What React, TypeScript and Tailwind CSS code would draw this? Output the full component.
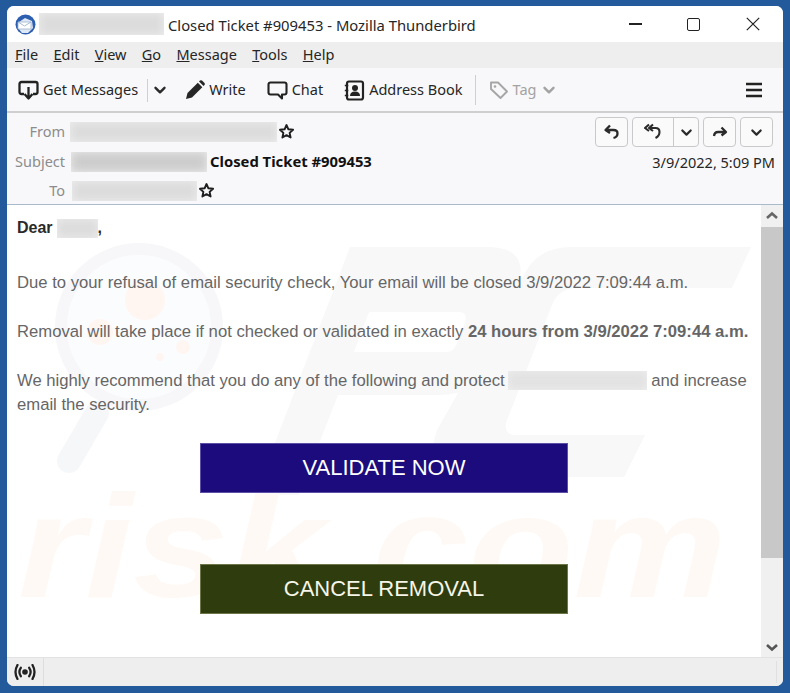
import React from "react";

const ui = { fontFamily: '"Noto Sans", "Open Sans", sans-serif' };

function Blur({ w, h, tone = "bg-[#dcdcdc]", className = "" }: { w: string; h: string; tone?: string; className?: string }) {
  return (
    <span className={`inline-block overflow-hidden bg-[#efefef] ${w} ${h} ${className}`}>
      <span className={`block w-full h-full blur-[4px] ${tone}`} />
    </span>
  );
}

function Chevron({ size = 14, color = "#2b2b2b", sw = 2.4 }: { size?: number; color?: string; sw?: number }) {
  return (
    <svg width={size} height={size} viewBox="0 0 14 14" fill="none">
      <path d="M2.5 4.8 7 9.3l4.500-4.500" stroke={color} strokeWidth={sw} strokeLinecap="round" strokeLinejoin="round" />
    </svg>
  );
}

function Star() {
  return (
    <svg width="17" height="17" viewBox="0 0 17 17" fill="none">
      <path d="M8.5 2 10.4 6.300l4.700.5-3.500 3.100 1 4.600-4.100-2.400-4.100 2.400 1-4.600-3.500-3.100 4.700-.5z" stroke="#1f1f1f" strokeWidth="1.900" strokeLinejoin="round" />
    </svg>
  );
}

function HeaderButton({ children, className = "" }: { children: React.ReactNode; className?: string }) {
  return (
    <div className={`h-[30px] flex items-center justify-center border border-[#c9c9c9] rounded-[4px] bg-[#fafafa] ${className}`}>
      {children}
    </div>
  );
}

function ToolItem({ icon, label, className = "" }: { icon: React.ReactNode; label: string; className?: string }) {
  return (
    <div className={`flex items-center gap-[4px] ${className}`}>
      {icon}
      <span>{label}</span>
    </div>
  );
}

function Watermark() {
  return (
    <div className="absolute inset-0 overflow-hidden pointer-events-none select-none">
      <svg className="absolute left-0 top-0" width="754" height="320" viewBox="0 0 754 320" fill="none">
        <circle cx="132" cy="122" r="78" stroke="#f7f7f9" strokeWidth="12" fill="#fbfcfe" />
        <circle cx="138" cy="95" r="20" fill="#fff6f2" />
        <circle cx="93" cy="127" r="13" fill="#fff6f2" />
        <circle cx="176" cy="142" r="7" fill="#fff6f2" />
        <circle cx="153" cy="152" r="4" fill="#fff6f2" />
        <path d="M90 208 62 256" stroke="#f6f7f9" strokeWidth="24" strokeLinecap="round" />
        <path
          fillRule="evenodd"
          fill="#f8f8f9"
          d="M343 42H480Q525 42 510 85L490 150Q477 190 430 190H331L292 290H248Z M362 107 347 147H440Q448 147 451 135L458 118Q461 107 452 107Z"
        />
        <path fill="#f8f8f9" d="M565 42H744L725 83H570Q552 83 545 100L500 215Q495 230 510 230H638L617 272H460Q415 272 430 225L515 75Q527 42 565 42Z" />
      </svg>
      <div
        className="absolute left-[11px] top-[269px] text-[#fff9f5] font-bold italic text-[146px] leading-none whitespace-nowrap origin-left scale-x-[1.18]"
        style={{ fontFamily: '"Liberation Sans", sans-serif' }}
      >
        risk.com
      </div>
    </div>
  );
}

export default function App() {
  return (
    <div className="w-[790px] h-[693px] bg-[#225a9b] pt-[6px] px-[7px] pb-[7px] overflow-hidden">
      <div className="h-full flex flex-col rounded-[7px] overflow-hidden bg-white text-[#1c1c1c]" style={ui}>
        {/* Title bar */}
        <div className="h-[36px] flex items-center bg-white shrink-0">
          <svg className="ml-[8px]" width="21" height="21" viewBox="0 0 21 21">
            <circle cx="10.5" cy="10.5" r="10" fill="#2d5fb0" />
            <path d="M4 8 10 4l7 3 1 7-5 5H7L3 14z" fill="#dfe8f5" />
            <path d="M3 8h13v7H3z" fill="#ffffff" stroke="#9fb3d1" strokeWidth="0.8" />
            <path d="M3 8l6.500 4L16 8" stroke="#9fb3d1" strokeWidth="0.9" fill="none" />
          </svg>
          <Blur w="w-[125px]" h="h-[22px]" className="ml-[3px]" tone="bg-[#dcdcdc]" />
          <span className="ml-[4px] pt-[2px] text-[14.8px] text-[#262626] whitespace-nowrap">Closed Ticket #909453 - Mozilla Thunderbird</span>
          <div className="ml-auto flex items-center h-full">
            <div className="w-[60px] flex justify-center pl-[2px]">
              <div className="w-[13px] h-[1.5px] bg-[#222]" />
            </div>
            <div className="w-[60px] flex justify-center pr-[2px]">
              <div className="w-[13px] h-[13px] rounded-[2px] border-[1.5px] border-[#222]" />
            </div>
            <div className="w-[59px] flex justify-center pr-[1px]">
              <svg width="14" height="14" viewBox="0 0 14 14" fill="none">
                <path d="M.8.8l12.400 12.400M13.200.8.8 13.200" stroke="#222" strokeWidth="1.200" />
              </svg>
            </div>
          </div>
        </div>

        {/* Menu */}
        <div className="h-[26px] shrink-0 bg-[#eeeeee] flex items-center pl-[8px] gap-[15.3px] text-[14.5px] text-[#262626]">
          <span><u>F</u>ile</span>
          <span><u>E</u>dit</span>
          <span><u>V</u>iew</span>
          <span><u>G</u>o</span>
          <span><u>M</u>essage</span>
          <span><u>T</u>ools</span>
          <span><u>H</u>elp</span>
        </div>

        {/* Toolbar */}
        <div className="h-[45px] shrink-0 bg-[#f8f8fa] border-b-[2px] border-[#cfcfcf] flex items-center pt-[1px] text-[14.5px] text-[#262626]">
          <ToolItem
            className="ml-[11px]"
            label="Get Messages"
            icon={
              <svg width="21" height="21" viewBox="0 0 21 21" fill="none">
                <path d="M6 14H3.500Q1.500 14 1.500 12V4Q1.500 2 3.500 2h14q2 0 2 2v8q0 2-2 2H15" stroke="#222" strokeWidth="2.300" />
                <path d="M10.500 7v11M6.500 14l4 4.500 4-4.500" stroke="#222" strokeWidth="2.300" strokeLinejoin="round" />
              </svg>
            }
          />
          <div className="ml-[9px] w-[1px] h-[23px] bg-[#cfcfcf]" />
          <div className="ml-[5px]"><Chevron size={14} /></div>
          <ToolItem
            className="ml-[18px]"
            label="Write"
            icon={
              <svg width="20" height="20" viewBox="0 0 20 20" fill="#262626">
                <path d="M1 19l1.500-6L12.800 2.700l4.500 4.500L7 17.500z" />
                <path d="M14 1.500l1-1q1-.7 2 0l2.500 2.500q.7 1 0 2l-1 1z" />
              </svg>
            }
          />
          <ToolItem
            className="ml-[21px]"
            label="Chat"
            icon={
              <svg width="21" height="21" viewBox="0 0 21 21" fill="none">
                <path d="M3.500 2.500h14q2 0 2 2v8q0 2-2 2h-2.500v4l-4-4h-7.500q-2 0-2-2v-8q0-2 2-2z" stroke="#222" strokeWidth="2.100" strokeLinejoin="round" />
              </svg>
            }
          />
          <ToolItem
            className="ml-[21px]"
            label="Address Book"
            icon={
              <svg width="21" height="21" viewBox="0 0 21 21" fill="none">
                <rect x="3" y="1.500" width="16" height="18" rx="2" stroke="#222" strokeWidth="2.200" />
                <circle cx="11" cy="8" r="3" fill="#222" />
                <path d="M6 16q0-4.500 5-4.500t5 4.500z" fill="#222" />
                <path d="M.8 5.500h3.500M.8 10.500h3.500M.8 15.500h3.500" stroke="#222" strokeWidth="1.700" />
              </svg>
            }
          />
          <div className="ml-[13px] w-[1px] h-[30px] bg-[#cfcfcf]" />
          <div className="ml-[13px] flex items-center gap-[3px] text-[#a3a3a3]">
            <svg width="20" height="20" viewBox="0 0 20 20" fill="none">
              <path d="M2 2.500h7l9 9-6.500 6.500-9.500-9z" stroke="#a6a6a6" strokeWidth="1.900" strokeLinejoin="round" />
              <circle cx="6" cy="6.500" r="1.300" fill="#a6a6a6" />
            </svg>
            <span>Tag</span>
            <div className="ml-[3px]"><Chevron size={14} color="#a3a3a3" /></div>
          </div>
          <svg className="ml-auto mr-[21px]" width="16" height="16" viewBox="0 0 16 16" fill="none">
            <path d="M0 2h16M0 8h16M0 14h16" stroke="#222" strokeWidth="2.400" />
          </svg>
        </div>

        {/* Message header */}
        <div className="h-[92px] shrink-0 bg-[#f8f8fa] border-b-[1.5px] border-[#a9bacb] flex justify-between text-[14.5px]">
          <div className="flex flex-col w-[420px]">
            <div className="flex items-center h-[31px] pt-[6px]">
              <span className="w-[58px] text-right text-[#8c8c8c]">From</span>
              <Blur w="w-[207px]" h="h-[20px]" className="ml-[5px]" />
              <div className="ml-[1px]"><Star /></div>
            </div>
            <div className="flex items-center h-[32px] pt-[3px]">
              <span className="w-[58px] text-right text-[#8c8c8c]">Subject</span>
              <Blur w="w-[136px]" h="h-[20px]" className="ml-[6px]" tone="bg-[#cdcdcd]" />
              <span className="ml-[3px] font-bold text-[14.8px] text-[#111]">Closed Ticket #909453</span>
            </div>
            <div className="flex items-center h-[27px] pt-[2px]">
              <span className="w-[58px] text-right text-[#8c8c8c]">To</span>
              <Blur w="w-[125px]" h="h-[20px]" className="ml-[7px]" />
              <div className="ml-[1px]"><Star /></div>
            </div>
          </div>
          <div className="flex flex-col items-end pr-[8px] pt-[4px]">
            <div className="flex gap-[4px] mr-[2px]">
              <HeaderButton className="w-[33px]">
                <svg width="18" height="18" viewBox="0 0 18 18" fill="none">
                  <path d="M7 2.500 2.500 7 7 10M3 7h7.500q4 0 4 3.500t-4 4.500" stroke="#2b2b2b" strokeWidth="2.300" strokeLinejoin="round" />
                </svg>
              </HeaderButton>
              <div className="w-[67px] h-[30px] flex border border-[#c9c9c9] rounded-[4px] bg-[#fafafa]">
                <div className="w-[41px] flex items-center justify-center border-r border-[#c9c9c9]">
                  <svg width="20" height="18" viewBox="0 0 20 18" fill="none">
                    <path d="M6 1.500 2 5l4 3M10 1.500 6 5l4 3M6.500 5h6q4 0 4 4t-4 6" stroke="#2b2b2b" strokeWidth="2.100" strokeLinejoin="round" />
                  </svg>
                </div>
                <div className="flex-1 flex items-center justify-center"><Chevron size={13} /></div>
              </div>
              <HeaderButton className="w-[33px]">
                <svg width="18" height="18" viewBox="0 0 18 18" fill="none">
                  <path d="M10.500 4.500 15 9l-4.500 3.500M14.500 9H7q-3.500 0-4 4" stroke="#2b2b2b" strokeWidth="2.300" strokeLinejoin="round" />
                </svg>
              </HeaderButton>
              <HeaderButton className="w-[33px]"><Chevron size={13} /></HeaderButton>
            </div>
            <div className="mt-[5px] text-[14.5px] text-[#262626] whitespace-nowrap">3/9/2022, 5:09 PM</div>
          </div>
        </div>

        {/* Body */}
        <div className="flex-1 min-h-0 flex bg-white">
          <div className="relative flex-1 min-w-0 pl-[10px] pt-[11px] text-[16.67px] leading-[24px] text-[#666666]" style={{ fontFamily: '"Liberation Sans", Arial, sans-serif' }}>
            <Watermark />
            <div className="relative">
              <div className="flex items-center text-[#2a2a2a] text-[16px] mb-[31px]">
                <b>Dear</b>
                <Blur w="w-[41px]" h="h-[19px]" className="ml-[4px]" />
                <b>,</b>
              </div>
              <p className="mb-[25px] whitespace-nowrap">Due to your refusal of email security check, Your email will be closed 3/9/2022 7:09:44 a.m.</p>
              <p className="mb-[25px] whitespace-nowrap">Removal will take place if not checked or validated in exactly <b>24 hours from 3/9/2022 7:09:44 a.m.</b></p>
              <p className="whitespace-nowrap">
                We highly recommend that you do any of the following and protect
                <Blur w="w-[139px]" h="h-[19px]" className="ml-[3px] align-[-4px]" tone="bg-[#e2e2e2]" /> and increase
                <br />
                email the security.
              </p>
              <div className="flex flex-col items-center ml-[183px] w-[368px] mt-[26px] gap-[71px]">
                <div className="w-full h-[50px] flex items-center justify-center bg-[#1c0b7d] border border-[#5c4fa8] text-white text-[22px] leading-none">VALIDATE NOW</div>
                <div className="w-full h-[50px] flex items-center justify-center bg-[#2f3c0d] border border-[#6c7648] text-[#f5f5e8] text-[22px] leading-none">CANCEL REMOVAL</div>
              </div>
            </div>
          </div>
          {/* Scrollbar */}
          <div className="w-[22px] shrink-0 bg-[#f0f0f0] flex flex-col items-center">
            <div className="h-[22px] flex items-center justify-center"><svg width="14" height="14" viewBox="0 0 14 14" fill="none"><path d="M2 9 7 4.500 12 9" stroke="#666" strokeWidth="2.600" /></svg></div>
            <div className="w-full h-[331px] bg-[#c8c8c8]" />
            <div className="mt-auto h-[21px] flex items-center justify-center"><svg width="14" height="14" viewBox="0 0 14 14" fill="none"><path d="M2 5 7 9.500 12 5" stroke="#555" strokeWidth="2.600" /></svg></div>
          </div>
        </div>

        {/* Status bar */}
        <div className="h-[29px] shrink-0 bg-[#eeeeee] border-t-[1.5px] border-[#e2e2e2] flex items-center">
          <div className="w-[37px] h-full flex items-center justify-center border-r border-[#dedede]">
            <svg width="22" height="16" viewBox="0 0 22 16" fill="none">
              <circle cx="11" cy="8" r="2.800" fill="#222" />
              <path d="M6.800 3.800Q4 8 6.800 12.200M15.200 3.800Q18 8 15.200 12.200M3.500 1Q-.5 8 3.500 15M18.500 1Q22.500 8 18.500 15" stroke="#222" strokeWidth="2.300" strokeLinecap="round" />
            </svg>
          </div>
          <div className="ml-auto mr-[6px] w-[1px] h-[22px] bg-[#e0e0e0]" />
        </div>
      </div>
    </div>
  );
}
